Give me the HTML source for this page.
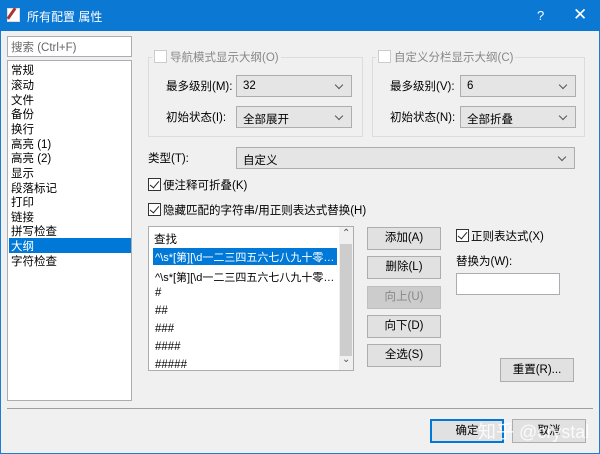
<!DOCTYPE html>
<html><head><meta charset="utf-8">
<style>
*{box-sizing:border-box;margin:0;padding:0}
body{width:600px;height:454px;overflow:hidden;background:#f0f0f0;font-family:"Liberation Sans","Microsoft YaHei","Noto Sans CJK SC",sans-serif;font-size:11.5px;color:#000;position:relative}
.win{position:absolute;left:0;top:0;width:600px;height:454px;border:1px solid #1a7fd4;border-top:none}
.title{position:absolute;left:0;top:0;width:600px;height:31px;background:#0b78d4;color:#fff}
.title .t{position:absolute;left:27px;top:8px;font-size:12px}
.title .ic{position:absolute;left:7px;top:8px;width:13px;height:14px;background:#fff;border:1px solid #ddd}
.title .ic:after{content:"";position:absolute;left:2px;top:-2px;width:3px;height:13px;background:#a33;transform:rotate(35deg)}
.title .q{position:absolute;left:537px;top:8px;font-size:13px}
.title .x{position:absolute;left:573px;top:5px;font-size:17px}
.a{position:absolute;white-space:nowrap}
.box{position:absolute;background:#fff;border:1px solid #abadb3}
.combo{position:absolute;background:#e5e5e5;border:1px solid #adadad;padding:4px 0 0 6px}
.combo:after{content:"";position:absolute;right:9px;top:6px;width:5px;height:5px;border-right:1px solid #555;border-bottom:1px solid #555;transform:rotate(45deg)}
.grp{position:absolute;border:1px solid #dcdcdc}
.cb{position:absolute;width:13px;height:13px;border:1px solid #333;background:#fff}
.cb.on:after{content:"";position:absolute;left:3px;top:0px;width:4px;height:8px;border-right:1.5px solid #222;border-bottom:1.5px solid #222;transform:rotate(40deg)}
.cb.dis{border-color:#ccc}
.btn{position:absolute;background:#e1e1e1;border:1px solid #adadad;text-align:center;line-height:21px}
.sel{background:#0078d7;color:#fff}
.li{position:absolute;left:3px}
.gray{color:#888}
.ell{white-space:nowrap;overflow:hidden;text-overflow:ellipsis;font-size:11px}
</style></head><body>
<div class="win"></div>
<div class="title"><div class="ic"></div><div class="t">所有配置 属性</div><div class="q">?</div><div class="x">✕</div></div>

<div class="box" style="left:7px;top:36px;width:125px;height:21px;padding:2px 3px;color:#666">搜索 (Ctrl+F)</div>
<div class="box" style="left:7px;top:60px;width:125px;height:341px">
<div class="li" style="top:1px">常规</div>
<div class="li" style="top:16px">滚动</div>
<div class="li" style="top:31px">文件</div>
<div class="li" style="top:45px">备份</div>
<div class="li" style="top:60px">换行</div>
<div class="li" style="top:75px">高亮 (1)</div>
<div class="li" style="top:89px">高亮 (2)</div>
<div class="li" style="top:104px">显示</div>
<div class="li" style="top:119px">段落标记</div>
<div class="li" style="top:133px">打印</div>
<div class="li" style="top:148px">链接</div>
<div class="li" style="top:162px">拼写检查</div>
<div class="sel" style="position:absolute;left:1px;top:177px;width:122px;height:15px;padding-left:2px">大纲</div>
<div class="li" style="top:192px">字符检查</div>
</div>

<div class="grp" style="left:148px;top:57px;width:215px;height:80px"></div>
<div class="a" style="left:152px;top:49px;background:#f0f0f0;padding:0 2px"><span class="cb dis" style="position:relative;display:inline-block;vertical-align:-2px;margin-right:3px"></span><span class="gray">导航模式显示大纲(O)</span></div>
<div class="a" style="left:166px;top:78px">最多级别(M):</div>
<div class="combo" style="left:236px;top:75px;width:116px;height:22px">32</div>
<div class="a" style="left:166px;top:109px">初始状态(I):</div>
<div class="combo" style="left:236px;top:106px;width:116px;height:22px">全部展开</div>

<div class="grp" style="left:372px;top:57px;width:213px;height:80px"></div>
<div class="a" style="left:376px;top:49px;background:#f0f0f0;padding:0 2px"><span class="cb dis" style="position:relative;display:inline-block;vertical-align:-2px;margin-right:3px"></span><span class="gray">自定义分栏显示大纲(C)</span></div>
<div class="a" style="left:390px;top:78px">最多级别(V):</div>
<div class="combo" style="left:460px;top:75px;width:116px;height:22px">6</div>
<div class="a" style="left:390px;top:109px">初始状态(N):</div>
<div class="combo" style="left:460px;top:106px;width:116px;height:22px">全部折叠</div>

<div class="a" style="left:148px;top:150px">类型(T):</div>
<div class="combo" style="left:236px;top:147px;width:339px;height:22px">自定义</div>

<div class="cb on" style="left:148px;top:178px"></div><div class="a" style="left:163px;top:177px">便注释可折叠(K)</div>
<div class="cb on" style="left:148px;top:203px"></div><div class="a" style="left:163px;top:202px">隐藏匹配的字符串/用正则表达式替换(H)</div>

<div class="box" style="left:148px;top:226px;width:206px;height:145px;overflow:hidden">
<div class="li" style="top:4px;left:5px">查找</div>
<div class="sel ell" style="position:absolute;left:4px;top:21px;width:184px;height:17px;padding:1px 0 0 2px">^\s*[第][\d一二三四五六七八九十零百千万]</div>
<div class="li ell" style="top:42px;left:6px;width:182px">^\s*[第][\d一二三四五六七八九十零百千万]</div>
<div class="li" style="top:60px;left:6px">#</div>
<div class="li" style="top:78px;left:6px">##</div>
<div class="li" style="top:96px;left:6px">###</div>
<div class="li" style="top:114px;left:6px">####</div>
<div class="li" style="top:132px;left:6px">#####</div>
<div style="position:absolute;left:190px;top:0;width:14px;height:143px;background:#f0f0f0"></div>
<div style="position:absolute;left:191px;top:17px;width:12px;height:112px;background:#cdcdcd"></div>
<div class="a" style="left:193px;top:1px;font-size:10px;color:#555">⌃</div>
<div class="a" style="left:193px;top:127px;font-size:10px;color:#555">⌄</div>
</div>

<div class="btn" style="left:367px;top:227px;width:74px;height:23px">添加(A)</div>
<div class="btn" style="left:367px;top:256px;width:74px;height:23px">删除(L)</div>
<div class="btn" style="left:367px;top:286px;width:74px;height:23px;background:#ccc;border-color:#bfbfbf;color:#888">向上(U)</div>
<div class="btn" style="left:367px;top:315px;width:74px;height:23px">向下(D)</div>
<div class="btn" style="left:367px;top:344px;width:74px;height:23px">全选(S)</div>

<div class="cb on" style="left:456px;top:229px"></div><div class="a" style="left:471px;top:228px">正则表达式(X)</div>
<div class="a" style="left:456px;top:253px">替换为(W):</div>
<div class="box" style="left:456px;top:273px;width:104px;height:22px"></div>

<div class="btn" style="left:500px;top:358px;width:74px;height:24px;line-height:22px">重置(R)...</div>

<div style="position:absolute;left:7px;top:408px;width:586px;height:1px;background:#a0a0a0"></div>
<div class="btn" style="left:430px;top:419px;width:74px;height:24px;border:2px solid #0078d7;line-height:20px">确定</div>
<div class="btn" style="left:512px;top:419px;width:74px;height:24px;line-height:22px">取消</div>
<div class="a" style="left:478px;top:418px;font-size:18px;color:rgba(255,255,255,0.85)">知乎 @crystal</div>
</body></html>
